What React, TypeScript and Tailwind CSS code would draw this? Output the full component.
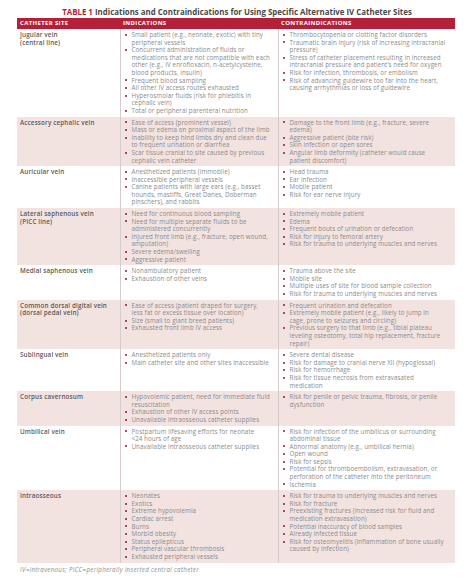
import React from "react";

type Row = { site: string[]; ind: string[]; contra: string[] };

// "|" marks a forced line break, matching the printed table
const rows: Row[] = [
  {
    site: ["Jugular vein", "(central line)"],
    ind: [
      "Small patient (e.g., neonate, exotic) with tiny|peripheral vessels",
      "Concurrent administration of fluids or|medications that are not compatible with each|other (e.g., IV enrofloxacin, n-acetylcysteine,|blood products, insulin)",
      "Frequent blood sampling",
      "All other IV access routes exhausted",
      "Hyperosmolar fluids (risk for phlebitis in|cephalic vein)",
      "Total or peripheral parenteral nutrition",
    ],
    contra: [
      "Thrombocytopenia or clotting factor disorders",
      "Traumatic brain injury (risk of increasing intracranial|pressure)",
      "Stress of catheter placement resulting in increased|intracranial pressure and patient\u2019s need for oxygen",
      "Risk for infection, thrombosis, or embolism",
      "Risk of advancing guidewire too far into the heart,|causing arrhythmias or loss of guidewire",
    ],
  },
  {
    site: ["Accessory cephalic vein"],
    ind: [
      "Ease of access (prominent vessel)",
      "Mass or edema on proximal aspect of the limb",
      "Inability to keep hind limbs dry and clean due|to frequent urination or diarrhea",
      "Scar tissue cranial to site caused by previous|cephalic vein catheter",
    ],
    contra: [
      "Damage to the front limb (e.g., fracture, severe|edema)",
      "Aggressive patient (bite risk)",
      "Skin infection or open sores",
      "Angular limb deformity (catheter would cause|patient discomfort)",
    ],
  },
  {
    site: ["Auricular vein"],
    ind: [
      "Anesthetized patients (immobile)",
      "Inaccessible peripheral vessels",
      "Canine patients with large ears (e.g., basset|hounds, mastiffs, Great Danes, Doberman|pinschers), and rabbits",
    ],
    contra: ["Head trauma", "Ear infection", "Mobile patient", "Risk for ear nerve injury"],
  },
  {
    site: ["Lateral saphenous vein", "(PICC line)"],
    ind: [
      "Need for continuous blood sampling",
      "Need for multiple separate fluids to be|administered concurrently",
      "Injured front limb (e.g., fracture, open wound,|amputation)",
      "Severe edema/swelling",
      "Aggressive patient",
    ],
    contra: [
      "Extremely mobile patient",
      "Edema",
      "Frequent bouts of urination or defecation",
      "Risk for injury to femoral artery",
      "Risk for trauma to underlying muscles and nerves",
    ],
  },
  {
    site: ["Medial saphenous vein"],
    ind: ["Nonambulatory patient", "Exhaustion of other veins"],
    contra: [
      "Trauma above the site",
      "Mobile site",
      "Multiple uses of site for blood sample collection",
      "Risk for trauma to underlying muscles and nerves",
    ],
  },
  {
    site: ["Common dorsal digital vein", "(dorsal pedal vein)"],
    ind: [
      "Ease of access (patient draped for surgery,|less fat or excess tissue over location)",
      "Size (small to giant breed patients)",
      "Exhausted front limb IV access",
    ],
    contra: [
      "Frequent urination and defecation",
      "Extremely mobile patient (e.g., likely to jump in|cage, prone to seizures and circling)",
      "Previous surgery to that limb (e.g., tibial plateau|leveling osteotomy, total hip replacement, fracture|repair)",
    ],
  },
  {
    site: ["Sublingual vein"],
    ind: ["Anesthetized patients only", "Main catheter site and other sites inaccessible"],
    contra: [
      "Severe dental disease",
      "Risk for damage to cranial nerve XII (hypoglossal)",
      "Risk for hemorrhage",
      "Risk for tissue necrosis from extravasated|medication",
    ],
  },
  {
    site: ["Corpus cavernosum"],
    ind: [
      "Hypovolemic patient, need for immediate fluid|resuscitation",
      "Exhaustion of other IV access points",
      "Unavailable intraosseous catheter supplies",
    ],
    contra: ["Risk for penile or pelvic trauma, fibrosis, or penile|dysfunction"],
  },
  {
    site: ["Umbilical vein"],
    ind: [
      "Postpartum lifesaving efforts for neonate|<24 hours of age",
      "Unavailable intraosseous catheter supplies",
    ],
    contra: [
      "Risk for infection of the umbilicus or surrounding|abdominal tissue",
      "Abnormal anatomy (e.g., umbilical hernia)",
      "Open wound",
      "Risk for sepsis",
      "Potential for thromboembolism, extravasation, or|perforation of the catheter into the peritoneum",
      "Ischemia",
    ],
  },
  {
    site: ["Intraosseous"],
    ind: [
      "Neonates",
      "Exotics",
      "Extreme hypovolemia",
      "Cardiac arrest",
      "Burns",
      "Morbid obesity",
      "Status epilepticus",
      "Peripheral vascular thrombosis",
      "Exhausted peripheral vessels",
    ],
    contra: [
      "Risk for trauma to underlying muscles and nerves",
      "Risk for fracture",
      "Preexisting fractures (increased risk for fluid and|medication extravasation)",
      "Potential inaccuracy of blood samples",
      "Already infected tissue",
      "Risk for osteomyelitis (inflammation of bone usually|caused by infection)",
    ],
  },
];

const font = { fontFamily: '"Open Sans", "Liberation Sans", sans-serif' };

export default function App() {
  return (
    <div className="w-[474px] h-[583px] bg-white overflow-hidden" style={font}>
      <h1 className="pt-[7px] text-center text-[7.9px] leading-[10px] font-bold text-[#4a4a4a] whitespace-nowrap">
        <span className="text-[#b41f39]">TABLE 1</span> Indications and Contraindications for Using Specific
        Alternative IV Catheter Sites
      </h1>

      <div className="mx-[17px] mt-[1px] w-[438px]">
        <div className="grid grid-cols-[103px_158px_177px] h-[11px] items-center bg-[#b41f39] text-white font-bold text-[6px] tracking-[0.35px] uppercase">
          <div className="pl-[3px]">Catheter Site</div>
          <div className="pl-[3px]">Indications</div>
          <div className="pl-[3px]">Contraindications</div>
        </div>

        {rows.map((r, i) => (
          <div
            key={i}
            className={`grid grid-cols-[103px_158px_177px] text-[6.2px] leading-[7.6px] tracking-[0.1px] ${
              i % 2 === 1 ? "bg-[#f2e3e1]" : "bg-white"
            }`}
          >
            <div className="py-[2px] pl-[3px] font-semibold text-[#5a5a5a] text-[6.3px] tracking-[0.15px]">
              {r.site.map((s) => (
                <div key={s} className="whitespace-nowrap">
                  {s}
                </div>
              ))}
            </div>
            <BulletList items={r.ind} />
            <BulletList items={r.contra} />
          </div>
        ))}
      </div>

      <p className="mt-[3px] pl-[20px] text-[6.2px] leading-[7px] italic text-[#8c8c8c] tracking-[0.3px] whitespace-nowrap">
        IV=intravenous; PICC=peripherally inserted central catheter
      </p>
    </div>
  );
}

function BulletList({ items }: { items: string[] }) {
  return (
    <ul className="border-l border-[#d6cccb] py-[2px] pl-[4px] text-[#8a8a8a]">
      {items.map((it) => (
        <li key={it} className="flex">
          <span className="mt-[2.8px] mr-[4.5px] h-[2px] w-[2px] shrink-0 rounded-full bg-[#8e1530]" />
          <span>
            {it.split("|").map((line) => (
              <span key={line} className="block whitespace-nowrap">
                {line}
              </span>
            ))}
          </span>
        </li>
      ))}
    </ul>
  );
}
